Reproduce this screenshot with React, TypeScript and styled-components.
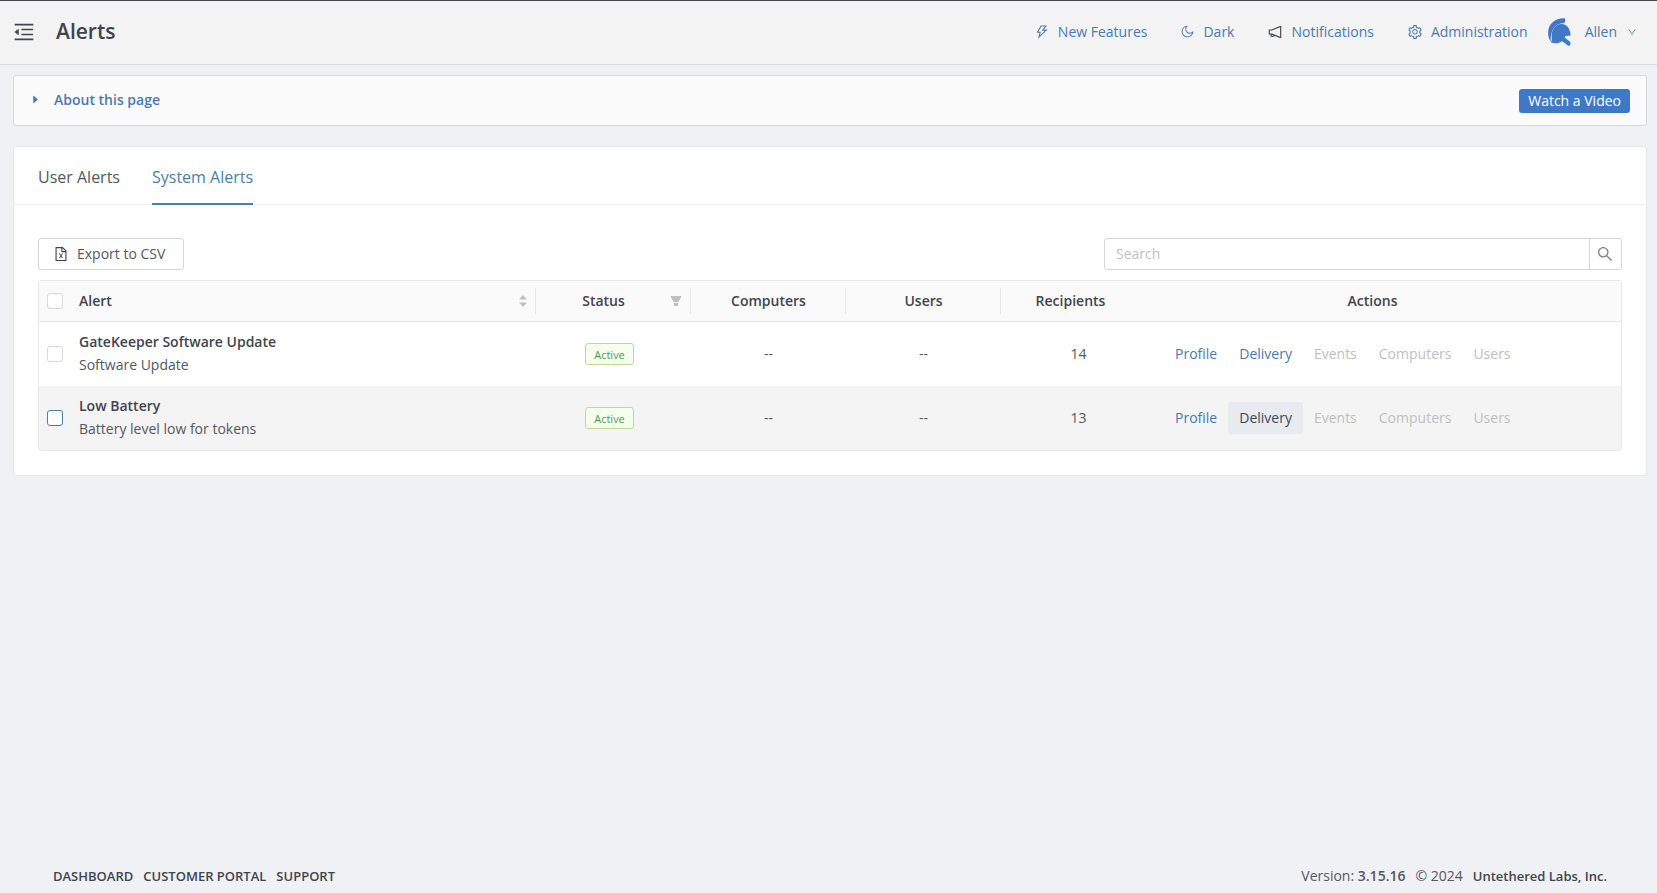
import React from 'react';
import styled, { createGlobalStyle, css } from 'styled-components';
import {
  AiOutlineMenuFold,
  AiOutlineThunderbolt,
  AiOutlineMoon,
  AiOutlineNotification,
  AiOutlineSetting,
  AiOutlineDown,
  AiFillCaretRight,
  AiOutlineFileExcel,
  AiOutlineSearch,
  AiFillFilter,
} from 'react-icons/ai';

const color = {
  text: '#55585f',
  heading: '#41444e',
  blue: '#4a7ab0',
  primary: '#3f79c6',
  tab: '#4c7fa6',
  muted: '#bfbfbf',
  line: '#e8e8e8',
  border: '#d5d7da',
};

const GlobalStyle = createGlobalStyle`
  *, *::before, *::after { box-sizing: border-box; }
  body {
    margin: 0;
    background: #eff1f4;
    color: ${color.text};
    font-family: "Open Sans", "Noto Sans", sans-serif;
    font-size: 14px;
    line-height: 22px;
  }
  button, input { font: inherit; color: inherit; }
  svg { display: block; flex: none; }
`;

const Page = styled.div`
  display: flex;
  flex-direction: column;
  min-height: 100vh;
  border-top: 1px solid #48444c;
`;

const Header = styled.header`
  display: flex;
  align-items: center;
  height: 64px;
  padding: 0 20px 2px 12px;
  background: #f3f3f3;
  border-bottom: 1px solid #d9dbe2;
`;

const IconButton = styled.button`
  display: flex;
  padding: 0;
  border: 0;
  background: none;
  color: ${color.heading};
  cursor: pointer;
`;

const Title = styled.h1`
  flex: 1;
  margin: 0 0 0 20px;
  padding-bottom: 2px;
  color: ${color.heading};
  font-size: 21px;
  line-height: 28px;
  font-weight: 600;
`;

const Nav = styled.nav`
  display: flex;
  align-items: center;
`;

const NavLink = styled.a`
  display: flex;
  align-items: center;
  gap: 8px;
  margin-right: 33px;
  color: ${color.blue};
  text-decoration: none;
  &:nth-last-of-type(1) { margin-right: 20px; }
`;

const UserButton = styled.button`
  display: flex;
  align-items: center;
  gap: 10px;
  padding: 0;
  border: 0;
  background: none;
  color: ${color.blue};
  cursor: pointer;
`;

const Avatar = styled.span`
  margin-right: 4px;
`;

const Main = styled.main`
  flex: 1;
  display: flex;
  flex-direction: column;
  gap: 20px;
  padding: 10px 10px 0 13px;
`;

const About = styled.section`
  display: flex;
  align-items: center;
  justify-content: space-between;
  height: 51px;
  padding: 0 16px;
  background: #fbfbfb;
  border: 1px solid ${color.border};
  border-radius: 3px;
`;

const AboutToggle = styled.button`
  display: flex;
  align-items: center;
  gap: 13px;
  padding: 0 0 2px;
  border: 0;
  background: none;
  color: ${color.blue};
  font-weight: 600;
  cursor: pointer;
`;

const VideoButton = styled.button`
  height: 24px;
  padding: 0 9px;
  border: 0;
  border-radius: 3px;
  background: ${color.primary};
  color: #fff;
  line-height: 24px;
  cursor: pointer;
`;

const Card = styled.section`
  background: #fff;
  border: 1px solid #e6e7ea;
  border-radius: 3px;
`;

const Tabs = styled.div`
  display: flex;
  gap: 32px;
  height: 58px;
  padding: 0 24px;
  border-bottom: 1px solid #f0f0f0;
`;

const Tab = styled.button<{ $active?: boolean }>`
  height: 58px;
  padding: 4px 0 0;
  border: 0;
  border-bottom: 2px solid ${p => (p.$active ? color.tab : 'transparent')};
  background: none;
  color: ${p => (p.$active ? color.tab : color.text)};
  font-size: 16px;
  line-height: 24px;
  cursor: pointer;
`;

const Panel = styled.div`
  padding: 33px 24px 24px;
`;

const Toolbar = styled.div`
  display: flex;
  justify-content: space-between;
  margin-bottom: 10px;
`;

const ExportButton = styled.button`
  display: flex;
  align-items: center;
  gap: 8px;
  height: 32px;
  padding: 0 18px 0 14px;
  border: 1px solid ${color.border};
  border-radius: 3px;
  background: #fff;
  cursor: pointer;
`;

const Search = styled.form`
  display: flex;
  width: 518px;
  height: 32px;
  border: 1px solid ${color.border};
  border-radius: 3px;
`;

const SearchInput = styled.input`
  flex: 1;
  min-width: 0;
  padding: 0 11px;
  border: 0;
  outline: 0;
  background: none;
  &::placeholder { color: ${color.muted}; opacity: 1; }
`;

const SearchButton = styled.button`
  display: flex;
  align-items: center;
  justify-content: center;
  width: 32px;
  padding: 0 2px 0 0;
  border: 0;
  border-left: 1px solid ${color.border};
  background: none;
  color: #858585;
  cursor: pointer;
`;

const Table = styled.table`
  width: 100%;
  table-layout: fixed;
  border-collapse: separate;
  border-spacing: 0;
  border: 1px solid ${color.line};
  border-radius: 3px;
`;

const Col = styled.col<{ $width?: number }>`
  ${p => p.$width && css`width: ${p.$width}px;`}
`;

const Th = styled.th<{ $right?: number }>`
  height: 41px;
  padding: 0 ${p => p.$right ?? 8}px 0 8px;
  background: #fafafa;
  border-bottom: 1px solid ${color.line};
  color: ${color.heading};
  font-weight: 600;
  text-align: center;
`;

const HeadCell = styled.div`
  display: flex;
  align-items: center;
  gap: 6px;
  height: 26px;
  padding-right: 7px;
  border-right: 1px solid ${color.line};
  color: #bfbfbf;
`;

const HeadLabel = styled.span<{ $left?: boolean }>`
  flex: 1;
  color: ${color.heading};
  text-align: ${p => (p.$left ? 'left' : 'center')};
`;

const Row = styled.tr<{ $hover?: boolean }>`
  background: ${p => (p.$hover ? '#f4f4f4' : '#fff')};
`;

const Td = styled.td`
  height: 64px;
  padding: 0 8px;
  text-align: center;
`;

const AlertTd = styled(Td)`
  padding-bottom: 2px;
  text-align: left;
`;

const Check = styled.input<{ $hover?: boolean }>`
  appearance: none;
  display: block;
  width: 16px;
  height: 16px;
  margin: 0;
  border: 1px solid ${p => (p.$hover ? color.tab : '#d9d9d9')};
  border-radius: 3px;
  background: #fff;
`;

const AlertName = styled.div`
  color: ${color.heading};
  font-weight: 600;
  line-height: 24px;
`;

const AlertText = styled.div`
  line-height: 22px;
`;

const Tag = styled.span`
  display: inline-block;
  height: 22px;
  margin-right: 8px;
  padding: 0 8px;
  border: 1px solid #b7dd96;
  border-radius: 3px;
  background: #f6ffed;
  color: #5a9a4c;
  font-size: 11px;
  line-height: 22px;
`;

const Actions = styled.div`
  display: flex;
`;

const Action = styled.button<{ $hover?: boolean }>`
  height: 32px;
  padding: 0 11px;
  border: 0;
  border-radius: 3px;
  background: ${p => (p.$hover ? '#e7ebf0' : 'none')};
  color: ${p => (p.$hover ? '#3d4859' : color.blue)};
  cursor: pointer;
  &:disabled { color: ${color.muted}; cursor: default; }
`;

const Footer = styled.footer`
  display: flex;
  justify-content: space-between;
  padding: 0 50px 6px 53px;
`;

const FooterGroup = styled.div`
  display: flex;
  gap: 10px;
`;

const FooterLink = styled.a`
  color: ${color.heading};
  font-size: 13px;
  font-weight: 600;
  text-decoration: none;
`;

const Version = styled.b`
  font-weight: 600;
`;

const Helmet = () => (
  <svg width="23" height="28" viewBox="0 0 22 27" fill={color.primary} aria-hidden="true">
    <path d="M16 0.300C9 -0.300 2 4 0.500 10.500C-0.500 15 0.200 19.500 2.600 23C2 16 4 10 8.500 6.800C10.500 5.400 13.500 4.800 15.500 5C16.800 3.500 17 1.500 16 0.300Z" />
    <path d="M12.500 5.700C7.500 6.200 4 10.500 3.500 15.500C3.200 19 4 22 2.600 23.500C7 25.200 11 24 13.500 22.300L19.500 26.800C21.500 27.200 22.200 24.500 21.200 23L16 18.800L16.800 17.300L21.800 16.800C21.500 11 18.500 5.500 12.500 5.700Z" />
  </svg>
);

const Sorter = () => (
  <svg width="10" height="14" viewBox="0 0 10 14" fill="currentColor" aria-hidden="true">
    <path d="M5 1L9 5.500H1ZM5 13L1 8.500H9Z" />
  </svg>
);

const FilterIcon = () => <AiFillFilter size={14} aria-hidden="true" />;

const alerts = [
  { name: 'GateKeeper Software Update', text: 'Software Update', recipients: 14, hover: false },
  { name: 'Low Battery', text: 'Battery level low for tokens', recipients: 13, hover: true },
];

export default function App() {
  return (
    <>
      <GlobalStyle />
      <Page>
        <Header>
          <IconButton type="button" aria-label="Collapse menu"><AiOutlineMenuFold size={24} /></IconButton>
          <Title>Alerts</Title>
          <Nav>
            <NavLink href="#features"><AiOutlineThunderbolt size={16} />New Features</NavLink>
            <NavLink href="#dark"><AiOutlineMoon size={15} />Dark</NavLink>
            <NavLink href="#notifications"><AiOutlineNotification size={16} color="#41444e" />Notifications</NavLink>
            <NavLink href="#administration"><AiOutlineSetting size={16} />Administration</NavLink>
            <UserButton type="button">
              <Avatar><Helmet /></Avatar>
              Allen
              <AiOutlineDown size={10} />
            </UserButton>
          </Nav>
        </Header>
        <Main>
          <About>
            <AboutToggle type="button"><AiFillCaretRight size={11} />About this page</AboutToggle>
            <VideoButton type="button">Watch a Video</VideoButton>
          </About>
          <Card>
            <Tabs role="tablist">
              <Tab type="button" role="tab" aria-selected={false}>User Alerts</Tab>
              <Tab type="button" role="tab" aria-selected $active>System Alerts</Tab>
            </Tabs>
            <Panel>
              <Toolbar>
                <ExportButton type="button"><AiOutlineFileExcel size={16} color="#41444e" />Export to CSV</ExportButton>
                <Search>
                  <SearchInput type="text" placeholder="Search" aria-label="Search" />
                  <SearchButton type="button" aria-label="Run search"><AiOutlineSearch size={18} /></SearchButton>
                </Search>
              </Toolbar>
              <Table>
                <colgroup>
                  <Col $width={32} />
                  <Col />
                  <Col $width={155} />
                  <Col $width={155} />
                  <Col $width={155} />
                  <Col $width={155} />
                  <Col $width={465} />
                </colgroup>
                <thead>
                  <tr>
                    <Th><Check type="checkbox" aria-label="Select all alerts" /></Th>
                    <Th $right={0}><HeadCell><HeadLabel $left>Alert</HeadLabel><Sorter /></HeadCell></Th>
                    <Th $right={0}><HeadCell><HeadLabel>Status</HeadLabel><FilterIcon /></HeadCell></Th>
                    <Th $right={0}><HeadCell><HeadLabel>Computers</HeadLabel></HeadCell></Th>
                    <Th $right={0}><HeadCell><HeadLabel>Users</HeadLabel></HeadCell></Th>
                    <Th $right={24}>Recipients</Th>
                    <Th $right={40}>Actions</Th>
                  </tr>
                </thead>
                <tbody>
                  {alerts.map(a => (
                    <Row key={a.name} $hover={a.hover}>
                      <Td><Check type="checkbox" aria-label={`Select ${a.name}`} $hover={a.hover} /></Td>
                      <AlertTd>
                        <AlertName>{a.name}</AlertName>
                        <AlertText>{a.text}</AlertText>
                      </AlertTd>
                      <Td><Tag>Active</Tag></Td>
                      <Td>--</Td>
                      <Td>--</Td>
                      <Td>{a.recipients}</Td>
                      <Td>
                        <Actions>
                          <Action type="button">Profile</Action>
                          <Action type="button" $hover={a.hover}>Delivery</Action>
                          <Action type="button" disabled>Events</Action>
                          <Action type="button" disabled>Computers</Action>
                          <Action type="button" disabled>Users</Action>
                        </Actions>
                      </Td>
                    </Row>
                  ))}
                </tbody>
              </Table>
            </Panel>
          </Card>
        </Main>
        <Footer>
          <FooterGroup>
            <FooterLink href="#dashboard">DASHBOARD</FooterLink>
            <FooterLink href="#portal">CUSTOMER PORTAL</FooterLink>
            <FooterLink href="#support">SUPPORT</FooterLink>
          </FooterGroup>
          <FooterGroup>
            <span>Version: <Version>3.15.16</Version></span>
            <span>© 2024</span>
            <FooterLink href="#company">Untethered Labs, Inc.</FooterLink>
          </FooterGroup>
        </Footer>
      </Page>
    </>
  );
}
